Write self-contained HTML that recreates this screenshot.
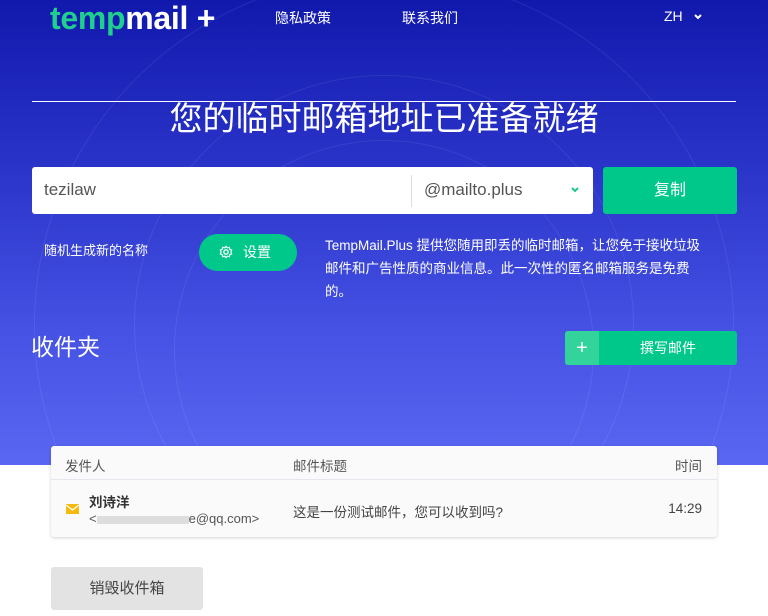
<!DOCTYPE html>
<html><head><meta charset="utf-8"><style>
*{margin:0;padding:0;box-sizing:border-box}
html,body{width:768px;height:616px;overflow:hidden}
body{background:#fff;font-family:"Liberation Sans","Noto Sans CJK SC",sans-serif;position:relative}
.hero{position:absolute;left:0;top:0;width:768px;height:465px;background:linear-gradient(180deg,#1119ad 0%,#2a33c8 35%,#4451e3 70%,#5a67f2 100%);overflow:hidden}
.ring{position:absolute;border:1px solid rgba(255,255,255,0.08);border-radius:50%}
.abs{position:absolute}
.w{color:#fff}
</style></head><body>
<div class="hero">
<div class="ring" style="left:134px;top:75px;width:500px;height:500px"></div>
<div class="ring" style="left:34px;top:-25px;width:700px;height:700px"></div>
<div class="ring" style="left:174px;top:140px;width:420px;height:420px"></div>
</div>
<div class="abs" style="left:50px;top:0px;font-size:32px;font-weight:bold;letter-spacing:-0.3px;line-height:36px"><span style="color:#1fd08d">temp</span><span class="w">mail +</span></div>
<div class="abs w" style="left:275px;top:8px;font-size:14px">隐私政策</div>
<div class="abs w" style="left:402px;top:8px;font-size:14px">联系我们</div>
<div class="abs w" style="left:664px;top:8px;font-size:14px">ZH <svg width="10" height="8" viewBox="0 0 10 8" style="margin-left:6px"><path d="M2 2l3 3 3-3" stroke="#fff" stroke-width="2" fill="none"/></svg></div>
<div class="abs" style="left:32px;top:101px;width:704px;height:1px;background:#fff"></div>
<div class="abs w" style="left:0;top:98px;width:768px;text-align:center;font-size:33px;line-height:42px">您的临时邮箱地址已准备就绪</div>
<div class="abs" style="left:32px;top:167px;width:561px;height:47px;background:#fff;border-radius:3px"></div>
<div class="abs" style="left:44px;top:180px;font-size:17px;color:#555">tezilaw</div>
<div class="abs" style="left:411px;top:175px;width:1px;height:32px;background:#ddd"></div>
<div class="abs" style="left:424px;top:180px;font-size:17px;color:#555">@mailto.plus</div>
<svg class="abs" style="left:570px;top:186px" width="10" height="8" viewBox="0 0 10 8"><path d="M2 2l3 3 3-3" stroke="#1fc78a" stroke-width="2" fill="none"/></svg>
<div class="abs w" style="left:603px;top:167px;width:134px;height:47px;background:#00c78a;border-radius:3px;text-align:center;line-height:47px;font-size:16px">复制</div>
<div class="abs w" style="left:44px;top:240px;font-size:13px">随机生成新的名称</div>
<div class="abs w" style="left:199px;top:234px;width:98px;height:37px;background:#00c78a;border-radius:19px;font-size:14px;line-height:37px;padding-left:20px">
<svg width="14" height="14" viewBox="0 0 16 16" style="vertical-align:-2px;margin-right:10px"><circle cx="8" cy="8" r="2.5" stroke="#fff" stroke-width="1.5" fill="none"/><path d="M8 1.5l1.5 1.7 2.2-.5.6 2.2 2.2.9-1 2.2 1 2.2-2.2.9-.6 2.2-2.2-.5L8 14.5l-1.5-1.7-2.2.5-.6-2.2-2.2-.9 1-2.2-1-2.2 2.2-.9.6-2.2 2.2.5z" stroke="#fff" stroke-width="1.3" fill="none"/></svg>设置</div>
<div class="abs w" style="left:325px;top:234px;font-size:13.5px;line-height:23px;white-space:nowrap">TempMail.Plus 提供您随用即丢的临时邮箱，让您免于接收垃圾<br>邮件和广告性质的商业信息。此一次性的匿名邮箱服务是免费<br>的。</div>
<div class="abs w" style="left:31px;top:333px;font-size:23px;line-height:28px">收件夹</div>
<div class="abs w" style="left:565px;top:331px;width:172px;height:34px;background:#00c78a;border-radius:3px;font-size:14px;line-height:34px">
<div class="abs" style="left:0;top:0;width:34px;height:34px;background:#33d39c;border-radius:3px 0 0 3px;text-align:center;font-size:20px">+</div>
<div class="abs" style="left:34px;width:138px;text-align:center">撰写邮件</div></div>
<div class="abs" style="left:51px;top:446px;width:666px;height:91px;background:#fafafa;border-radius:3px;box-shadow:0 1px 3px rgba(0,0,0,0.18)">
<div class="abs" style="left:0;top:33px;width:666px;height:1px;background:#e6e6ee"></div>
<div class="abs" style="left:14px;top:9px;font-size:13.5px;color:#555">发件人</div>
<div class="abs" style="left:242px;top:9px;font-size:13.5px;color:#555">邮件标题</div>
<div class="abs" style="right:15px;top:9px;font-size:13.5px;color:#555">时间</div>
<div class="abs" style="left:15px;top:58px;width:13px;height:10px;background:#f5b90f"><svg width="13" height="10" style="display:block"><path d="M0 1l6.5 5 6.5-5" stroke="#fff" stroke-width="1.2" fill="none"/></svg></div>
<div class="abs" style="left:38px;top:45px;font-size:13.5px;font-weight:bold;color:#333">刘诗洋</div>
<div class="abs" style="left:38px;top:65px;font-size:13px;color:#555">&lt;<span style="display:inline-block;width:92px;height:8px;background:#ddd;vertical-align:middle"></span>e@qq.com&gt;</div>
<div class="abs" style="left:242px;top:55px;font-size:13.5px;color:#444">这是一份测试邮件，您可以收到吗?</div>
<div class="abs" style="right:15px;top:55px;font-size:13.5px;color:#444">14:29</div>
</div>
<div class="abs" style="left:51px;top:567px;width:152px;height:43px;background:#e3e3e3;border-radius:3px;text-align:center;line-height:43px;font-size:15px;color:#444">销毁收件箱</div>
</body></html>
